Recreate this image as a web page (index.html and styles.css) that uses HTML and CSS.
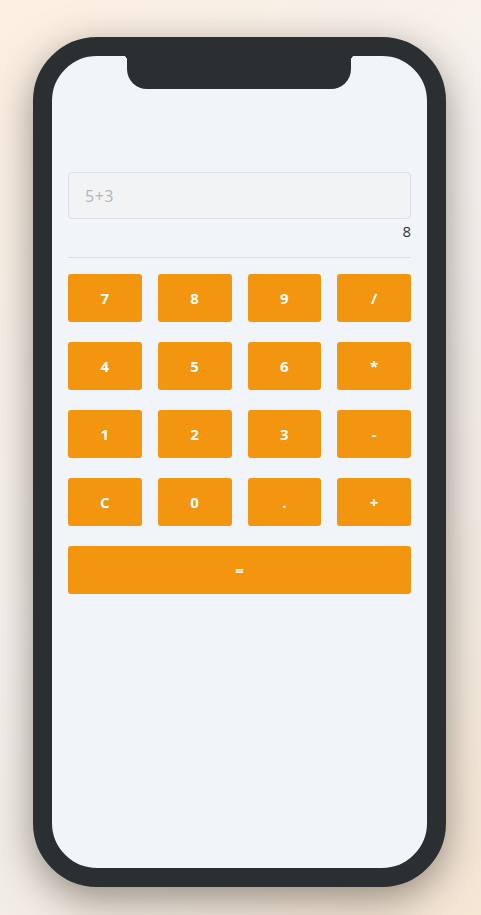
FILE: index.html
```html
<!DOCTYPE html>
<html lang="en">
<head>
<meta charset="utf-8">
<title>Calculator</title>
<link rel="stylesheet" href="styles.css">
</head>
<body>
<div class="stage">
  <div class="phone">
    <div class="notch"></div>
    <div class="screen">
      <div class="display">
        <input class="expr" type="text" placeholder="5+3">
        <div class="result">8</div>
      </div>
      <div class="divider"></div>
      <div class="keys">
        <button class="key">7</button>
        <button class="key">8</button>
        <button class="key">9</button>
        <button class="key">/</button>
        <button class="key">4</button>
        <button class="key">5</button>
        <button class="key">6</button>
        <button class="key">*</button>
        <button class="key">1</button>
        <button class="key">2</button>
        <button class="key">3</button>
        <button class="key">-</button>
        <button class="key">C</button>
        <button class="key">0</button>
        <button class="key">.</button>
        <button class="key">+</button>
        <button class="key key-wide">=</button>
      </div>
    </div>
  </div>
</div>
</body>
</html>
```

FILE: styles.css
```css
html, body {
  margin: 0;
  padding: 0;
}
body {
  width: 481px;
  height: 915px;
  overflow: hidden;
  background: linear-gradient(135deg, #fdefe1 0%, #f5f2ee 45%, #f2eee9 60%, #f6e6d4 100%);
  font-family: "Open Sans", "Noto Sans", sans-serif;
}
.stage {
  display: flex;
  justify-content: flex-start;
  padding: 37px 0 0 33px;
}
.phone {
  position: relative;
  width: 375px;
  height: 812px;
  border: 19px solid #2c2f32;
  border-radius: 64px;
  background: #f1f5f9;
  box-shadow: 0 12px 40px rgba(55, 45, 35, 0.5);
}
.notch {
  position: absolute;
  top: -1px;
  left: 75px;
  width: 224px;
  height: 34px;
  background: #2c2f32;
  border-radius: 0 0 20px 20px;
}
.notch::before,
.notch::after {
  content: "";
  position: absolute;
  top: 0;
  width: 6px;
  height: 6px;
  background: radial-gradient(circle at 0 100%, transparent 6px, #2c2f32 6.5px);
}
.notch::before {
  left: -6px;
}
.notch::after {
  right: -6px;
  background: radial-gradient(circle at 100% 100%, transparent 6px, #2c2f32 6.5px);
}
.screen {
  height: 100%;
  border-radius: 45px;
  overflow: hidden;
  padding: 116px 16px 0;
  box-sizing: border-box;
}
.display {
  display: flex;
  flex-direction: column;
}
.expr {
  box-sizing: border-box;
  width: 100%;
  height: 47px;
  margin: 0;
  padding: 0 16px;
  border: 1px solid #dcdfe6;
  border-radius: 4px;
  background: #f2f3f5;
  font-family: "Open Sans", "Noto Sans", sans-serif;
  font-size: 16px;
  letter-spacing: 0.5px;
  color: #606266;
  outline: none;
}
.expr::placeholder {
  color: #b1b5bd;
}
.result {
  align-self: flex-end;
  margin-top: 1px;
  font-size: 15px;
  line-height: 22px;
  color: #2c3440;
}
.divider {
  height: 1px;
  background: #dcdfe6;
  margin: 15px 0 16px;
}
.keys {
  display: grid;
  grid-template-columns: repeat(4, 1fr);
  column-gap: 16px;
  row-gap: 20px;
}
.key {
  height: 48px;
  border: none;
  border-radius: 3px;
  background: #f3950f;
  color: #ffffff;
  font-family: "Open Sans", "Noto Sans", sans-serif;
  font-weight: 700;
  font-size: 15px;
  padding: 0;
  cursor: pointer;
}
.key-wide {
  grid-column: 1 / -1;
}
```
